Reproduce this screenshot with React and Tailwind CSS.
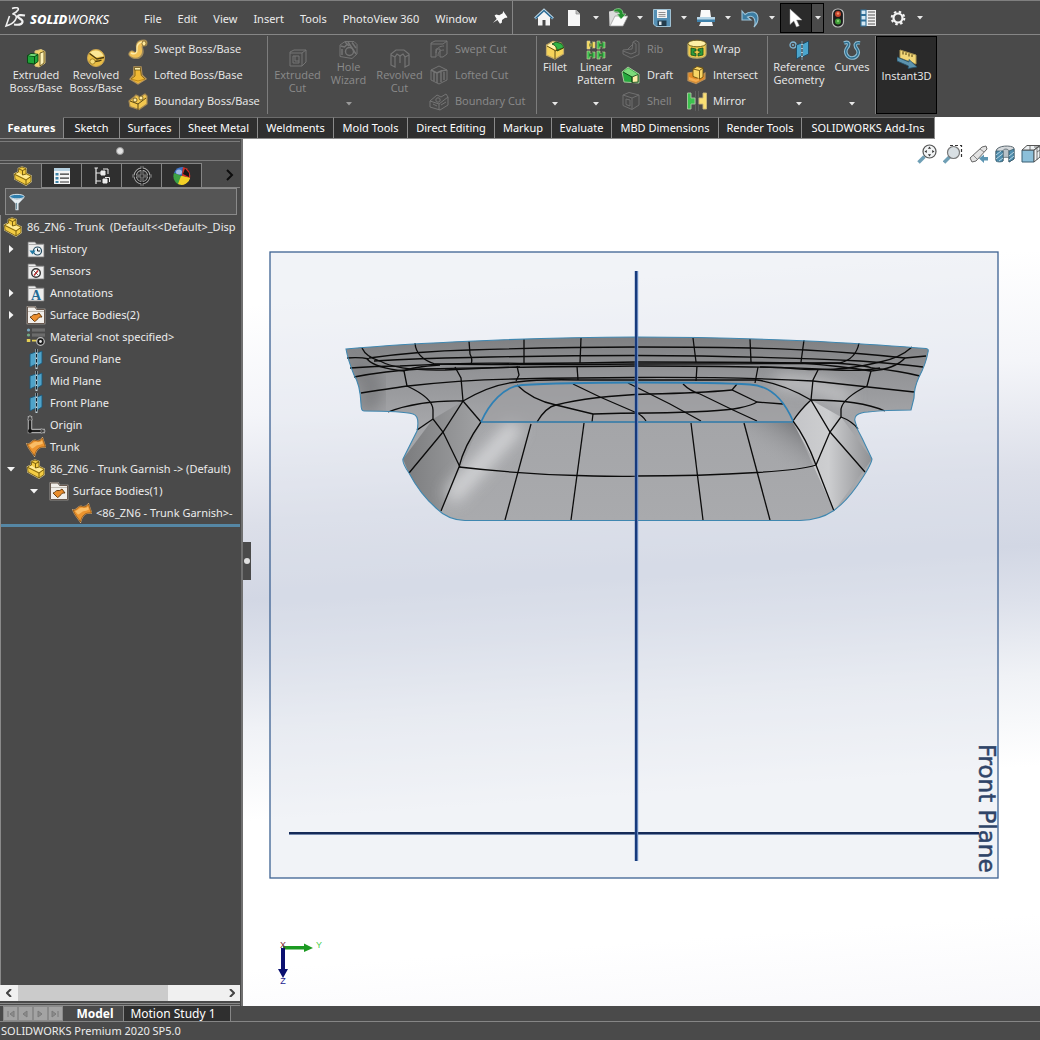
import { clsx } from 'clsx';

const menus = ['File', 'Edit', 'View', 'Insert', 'Tools', 'PhotoView 360', 'Window'];

const ribbonTabs = [
  { name: 'Features', width: 'w-[64px]' },
  { name: 'Sketch', width: 'w-[56px]' },
  { name: 'Surfaces', width: 'w-[60px]' },
  { name: 'Sheet Metal', width: 'w-[78px]' },
  { name: 'Weldments', width: 'w-[76px]' },
  { name: 'Mold Tools', width: 'w-[74px]' },
  { name: 'Direct Editing', width: 'w-[87px]' },
  { name: 'Markup', width: 'w-[57px]' },
  { name: 'Evaluate', width: 'w-[60px]' },
  { name: 'MBD Dimensions', width: 'w-[107px]' },
  { name: 'Render Tools', width: 'w-[83px]' },
  { name: 'SOLIDWORKS Add-Ins', width: 'w-[133px]' },
];

const tree = [
  { name: 'History', icon: 'history', arrow: 'closed' },
  { name: 'Sensors', icon: 'sensors' },
  { name: 'Annotations', icon: 'annotations', arrow: 'closed' },
  { name: 'Surface Bodies(2)', icon: 'bodies', arrow: 'closed' },
  { name: 'Material <not specified>', icon: 'material' },
  { name: 'Ground Plane', icon: 'plane' },
  { name: 'Mid Plane', icon: 'plane' },
  { name: 'Front Plane', icon: 'plane' },
  { name: 'Origin', icon: 'origin' },
  { name: 'Trunk', icon: 'surface' },
  { name: '86_ZN6 - Trunk Garnish -> (Default)', icon: 'part', arrow: 'open' },
  { name: 'Surface Bodies(1)', icon: 'bodies', arrow: 'open', depth: 1 },
  { name: '<86_ZN6 - Trunk Garnish>-', icon: 'surface', depth: 2 },
];

const depthPad = ['pl-1.5', 'pl-[29px]', 'pl-[52px]'];

const folder = (
  <>
    <path d="M2 3h7l1.500 2H18v13H2z" fill="#ececec" stroke="#777" strokeWidth="0.800" />
    <path d="M2.500 5.500h15" stroke="#9a9a9a" strokeWidth="0.800" />
  </>
);

const icons = {
  // features
  extrude: (
    <>
      <path d="M9 3l6-1.500 4 2V15l-6 4-4-1z" fill="#f2d36b" stroke="#d9c07a" />
      <path d="M14 5l4-1.500V15l-4 3z" fill="#fff3b8" stroke="#54430d" strokeWidth="0.800" />
      <path d="M1.500 7.500L5 5.500l7 .8v7.200l-3.500 2.500-7-1z" fill="#1fa53a" stroke="#0a4a14" />
      <path d="M1.500 7.500l7 1 3.500-2M8.500 8.500V16" fill="none" stroke="#0a4a14" />
      <path d="M2.300 7.400L5.200 6l5.800.6-2.700 1.300z" fill="#7fe07f" />
    </>
  ),
  revolve: (
    <>
      <circle cx="10" cy="10" r="8.500" fill="#e9bd45" stroke="#c9a452" />
      <path d="M4 4.500C8 1 15 2 17.500 8L9.500 9.500z" fill="#fbe796" />
      <path d="M3.500 5.500l7.500 5.500L18 9.500M4 14.500c5-2 8-.5 11.500-2.500" fill="none" stroke="#4a3a0c" strokeWidth="1.300" />
      <circle cx="6.500" cy="13.500" r="2.600" fill="#f7dd7a" stroke="#8a6a14" strokeWidth="0.700" />
    </>
  ),
  sweep: (
    <>
      <path d="M4 15c5 4 9 0 8-4S10 4 16 4" fill="none" stroke="#a08a5a" strokeWidth="7" strokeLinecap="round" />
      <path d="M4 15c5 3 8 0 7.500-4S10 4 16 4" fill="none" stroke="#f0c055" strokeWidth="5" strokeLinecap="round" />
      <path d="M3 14c4 2 6.500 0 6-4s1-6 5-7" fill="none" stroke="#fdeaa5" strokeWidth="1.400" />
      <ellipse cx="16" cy="4.500" rx="2" ry="2.600" fill="#ffe99b" stroke="#6d5726" strokeWidth="0.800" />
    </>
  ),
  loft: (
    <>
      <path d="M6 2h7l1 8 4 4-8 5-8-5 3.500-4z" fill="#f1b934" stroke="#b8955a" strokeWidth="1.300" />
      <path d="M6.500 2.500h6v2.500h-6z" fill="#fff0ad" stroke="#54430d" strokeWidth="0.700" />
      <path d="M7 5v6l-4 3M12.500 5l.8 5.500L17 14" fill="none" stroke="#5d450c" strokeWidth="0.700" />
      <path d="M3 14l7 2 7-2" fill="none" stroke="#b07a12" strokeWidth="0.800" />
    </>
  ),
  boundary: (
    <>
      <path d="M1 10l5-4 2-2 4 2 5-3 2 2v8l-8 5.500-9-3z" fill="#f2c74f" stroke="#a88a50" strokeWidth="1.200" />
      <path d="M2 10l8 3 8-6M10 13v6" fill="none" stroke="#4a3a0c" strokeWidth="0.900" />
      <circle cx="7" cy="9" r="2" fill="#ffeaa2" stroke="#4a3a0c" strokeWidth="0.700" />
      <circle cx="13" cy="7" r="2" fill="#ffeaa2" stroke="#4a3a0c" strokeWidth="0.700" />
    </>
  ),
  cutExtrude: (
    <g fill="none" stroke="#747474">
      <path d="M2 4l4-2h12v12l-4 4H2z" />
      <path d="M2 5h12v13M14 5l4-3" />
      <path d="M5 8h6v7H5zM7 8v5h4" />
    </g>
  ),
  holeWizard: (
    <g fill="none" stroke="#747474">
      <path d="M1 5l5-3.500h9l3 3V14l-5 4.500-12-2z" />
      <path d="M1.500 6l4 1 3-3M6 2l4 4M9 2l8 12M13 2.500L17 8M3 9v6" strokeWidth="1.500" />
      <circle cx="10.500" cy="11.500" r="4" strokeWidth="1.400" />
    </g>
  ),
  cutRevolve: (
    <g fill="none" stroke="#747474" strokeWidth="1.200">
      <path d="M1 6l5-4h8l5 4v11l-4 2V9l-2-3-3 2-3-2-2 3v10l-4-2z" />
      <path d="M5 9L1 7M15 9l4-2M10 8v7" />
    </g>
  ),
  cutSweep: (
    <g fill="none" stroke="#747474">
      <path d="M2 4l4-2h12v13l-4 3h-3V10H7v8H2z" />
      <path d="M2 5h12l4-3M7 14c0-5 4-7 8-7M9 17c0-4 2-6 6-6" />
    </g>
  ),
  cutLoft: (
    <g fill="none" stroke="#747474">
      <path d="M2 5l8-4 8 4v10l-8 4-8-4z" />
      <path d="M2 5l6 3v10M8 8l4-2v11M12 6l6-1M5 7v9M15 7v8" strokeWidth="1.400" />
    </g>
  ),
  cutBoundary: (
    <g fill="none" stroke="#747474">
      <path d="M1 10l7-6 4 2 5-3 2 3v8l-8 5-10-3z" />
      <path d="M1 10l9 3 9-7M10 13v6M4 13l4 2M12 14l5-3" />
      <circle cx="9" cy="9" r="2.200" />
    </g>
  ),
  fillet: (
    <>
      <path d="M1.500 5L8 1.500l8 1.500 2.500 4v7L10 19l-8.500-4z" fill="#f6d45a" stroke="#c2aa67" strokeWidth="1.200" />
      <path d="M2 5.500l6-3.500 8 1.500-4 2.500c-1.500 1-2 2-2 3.500z" fill="#fff2b0" />
      <path d="M7 4l4-2 5 1.500c1.500 1 2.500 2.500 2.500 4.500L12 11c0-4-2-6-5-7z" fill="#2fb344" stroke="#0f4d1a" strokeWidth="0.900" />
      <path d="M2 6l8 4.500V19M10 11l8-3" fill="none" stroke="#54430d" strokeWidth="0.900" />
    </>
  ),
  pattern: (
    <>
      {[[1, 1, '#f7db5e'], [11, 1, '#3cc04f'], [1, 11, '#3cc04f'], [11, 11, '#3cc04f']].map(([x, y, fill]) => (
        <g key={`${x}-${y}`} transform={`translate(${x} ${y})`}>
          <path d="M0 0h3v2.500h2V1h3v6H5V5.500H3V8H0z" fill={fill} stroke="#d3ccA0" strokeWidth="0.600" />
          <path d="M3 2.500v3M5 1v6" stroke="#1c3a1c" strokeWidth="0.900" />
        </g>
      ))}
    </>
  ),
  rib: (
    <g fill="none" stroke="#6f6f6f">
      <path d="M2 11l9-1 1-7 3-1.500 3 2v12l-8 3.500-8-4z" />
      <path d="M12 3l3 2v8l-5 2-8-3M6 11l6-6" />
    </g>
  ),
  draft: (
    <>
      <path d="M1 7l6-5 11 7v9L3 17z" fill="#25a83d" stroke="#a9c79c" />
      <path d="M2 7l5-4 10 6.500-6 2.500z" fill="#7ddb7b" />
      <path d="M11 12l6-2.500V17l-6 .500z" fill="#fff0a8" stroke="#234d22" strokeWidth="0.900" />
      <path d="M2 7l9 5v5.500" fill="none" stroke="#0c4a15" />
    </>
  ),
  shell: (
    <g fill="none" stroke="#6f6f6f">
      <path d="M2 4l6-2.500L18 4v10l-7 4.500-9-4z" />
      <path d="M2 4l9 3v11M11 7l7-3M5 8l4 1v6l-4-1.500z" />
    </g>
  ),
  wrap: (
    <>
      <path d="M1 5v10c0 5.500 18 5.500 18 0V5z" fill="#efc948" stroke="#b7aa6a" strokeWidth="1.200" />
      <ellipse cx="10" cy="4.500" rx="9" ry="3.300" fill="#fff0a6" stroke="#6b5815" strokeWidth="0.900" />
      <path d="M4 9l5 1v2H7v2l2 .5V17l-5-1zM11 10l5-1v7l-5 1v-2.500l2-.500v-2h-2z" fill="#2c9a3c" stroke="#174d1d" strokeWidth="0.800" />
    </>
  ),
  intersect: (
    <>
      <path d="M1 8l5-1 9 3 3-2v6l-9 4.500-8-3z" fill="#e48b27" stroke="#bb9157" strokeWidth="1.200" />
      <path d="M6 4l4-2.500 6 1.500v9l-3 2-7-2.500z" fill="#f8d565" stroke="#6b5010" strokeWidth="0.900" />
      <path d="M6 4l6.500 1.500L16 3M12.500 5.500V14" fill="none" stroke="#6b5010" strokeWidth="0.900" />
      <path d="M2 12l7 2.500 3-1.500v2.500l-3 1.500-7-2z" fill="#f4ad4f" />
    </>
  ),
  mirror: (
    <>
      <path d="M0.500 2H4v5h4v6H4v5H.5z" fill="#3cc24e" stroke="#a9c7a0" strokeWidth="0.900" />
      <path d="M19.500 2H16v5h-4v6h4v5h3.500z" fill="#f9df73" stroke="#c9b77a" strokeWidth="0.900" />
      <path d="M10 0v20" stroke="#b5b5b5" strokeWidth="2.400" />
      <path d="M10 0v20" stroke="#0d0d0d" strokeWidth="1.300" />
    </>
  ),
  refGeometry: (
    <>
      <circle cx="4" cy="5" r="3" fill="none" stroke="#7fb4d2" strokeWidth="1.300" />
      <circle cx="4" cy="5" r="1" fill="#7fb4d2" />
      <path d="M7.500 5l5-2v13l-5 3zM13.500 4l6-3v13l-6 3z" fill="#4ba5cc" stroke="#1d4a63" strokeWidth="0.900" />
      <path d="M13 1v19" stroke="#b8d3df" strokeWidth="1.800" />
      <path d="M13 1v19" stroke="#0f1c26" strokeDasharray="3 1" />
    </>
  ),
  curves: (
    <>
      <path d="M2 3c5-2 6 1 3 5s0 10 5 10 8-5 5-9-2-7 3-6" fill="none" stroke="#8fbbd0" strokeWidth="3.600" />
      <path d="M2 3c5-2 6 1 3 5s0 10 5 10 8-5 5-9-2-7 3-6" fill="none" stroke="#2b6d8e" strokeWidth="1.400" />
    </>
  ),
  instant3d: (
    <>
      <path d="M3 1l16 5v9L3 9z" fill="#f2d778" stroke="#ac9752" />
      <path d="M6 2.500v3M9 3.500v2.500M12 4.500v3M15 5.500v2.500" stroke="#4a3b0b" />
      <path d="M0 8l12 5v-2.500l8 7.500-9 1.500.500-2.500L0 12z" fill="#5d93ad" stroke="#24516a" strokeWidth="0.800" />
    </>
  ),
  // quick access toolbar
  home: (
    <>
      <path d="M4 9v8.500h4.500v-5.500h3v5.500H16V9l-6-5.500z" fill="#f4f4f4" />
      <path d="M1 10.500L10 2l9 8.500" fill="none" stroke="#b9d6e8" strokeWidth="2.600" />
      <path d="M1.500 10.500L10 2.500l8.500 8" fill="none" stroke="#20618b" strokeWidth="1.200" />
    </>
  ),
  newDoc: (
    <>
      <path d="M4 2h8l4 4v12H4z" fill="#f7f7f7" />
      <path d="M12 2v4h4" fill="#c4c4c4" stroke="#848484" strokeWidth="0.700" />
    </>
  ),
  open: (
    <>
      <path d="M1 3.500l5-1 1.500 2H12v13.500H1.500z" fill="#dcdcdc" />
      <path d="M2 18L7 8h13l-5 10z" fill="#fafafa" stroke="#999" strokeWidth="0.700" />
      <path d="M6 2c5-3 9-1 9 4h3l-5 5-4-5h2.500C11.500 4 9 3 6 4z" fill="#23912f" stroke="#a6d7a6" strokeWidth="0.700" />
    </>
  ),
  save: (
    <>
      <path d="M1.500 1.500h17v17H4l-2.500-2.500z" fill="#5590b5" stroke="#a9cbdd" strokeWidth="0.900" />
      <path d="M5 2h10v8H5z" fill="#f4f4f4" />
      <path d="M6.500 4.500h7M6.500 6.500h7M6.500 8.300h7" stroke="#777" strokeWidth="0.800" />
      <path d="M5.500 12.500h9V18h-9z" fill="#243c4c" />
      <path d="M7 13.500h2.500V17H7z" fill="#dfe9ef" />
    </>
  ),
  print: (
    <>
      <path d="M5 2h9l1 7H4z" fill="#fafafa" />
      <path d="M1 9h18v5H1z" fill="#b7d5e6" />
      <path d="M1 11.500h18V14H1z" fill="#3e81ab" />
      <path d="M5 14h11l1 4H3z" fill="#f4f4f4" />
    </>
  ),
  undo: <path d="M2 3v9h9L7.500 9c4-2 8 0 7.500 7 0 1-.5 2-1 3 6-6 5-15-2-15-3 0-5 .5-7 2.500z" fill="#3c7da3" stroke="#9cc4da" strokeWidth="1.100" />,
  cursor: <path d="M4 1v15.500l3.800-3.500 2.700 6 2.800-1.200-2.700-5.800h5.400z" fill="#fff" stroke="#999" strokeWidth="0.500" />,
  traffic: (
    <>
      <rect x="4.500" y="1" width="11" height="18" rx="5" fill="#1c1c1c" stroke="#bdbdbd" strokeWidth="1.200" />
      <circle cx="10" cy="6" r="3" fill="#c6452c" />
      <circle cx="10" cy="13.500" r="3" fill="#3f9b37" />
      <circle cx="10" cy="5.500" r="1.200" fill="#f0936e" />
      <circle cx="10" cy="13" r="1.200" fill="#7fcf6c" />
    </>
  ),
  options: (
    <>
      <path d="M3 2h15v16H3z" fill="#f1f1f1" />
      <path d="M3 2h5v4.500H3zM3 7.500h5V12H3zM3 13h5v5H3z" fill="#d5e8f3" stroke="#2f6f98" strokeWidth="1.100" />
      <path d="M10 4h7M10 7h7M10 10h7M10 13h7M10 16h7" stroke="#555" />
    </>
  ),
  gear: (
    <g fill="none" stroke="#f4f4f4">
      <circle cx="10" cy="10" r="4.500" strokeWidth="2.200" />
      <circle cx="10" cy="10" r="6.300" strokeWidth="2" strokeDasharray="2.474 2.474" />
    </g>
  ),
  pin: (
    <path d="M11 2l6 6-1.500 1-1-.200-3 3.200.300 3-1.800 1.500-3.500-3.500L2 17l3.500-5L2.500 8.500 4 7l3.500.3L11 4.500z" fill="#fafafa" transform="rotate(10 10 10)" />
  ),
  // manager tabs and tree
  part: (
    <>
      <path d="M1.500 8l4-2V2.500L9 1l4 1.500v5L18 10v5.500l-5 3.500L2 13z" fill="#f3cc43" stroke="#e7d9a0" strokeWidth="1.600" />
      <path d="M1.500 8l4-2V2.500L9 1l4 1.500v5L18 10v5.500l-5 3.500L2 13z" fill="#f3cc43" stroke="#6b5208" strokeWidth="0.800" />
      <path d="M2.500 8l3.500-1.500 3 2.500 3.500-.500 4.500 2-4 2.500z" fill="#ffeb95" />
      <path d="M6 3l3.500 1.500L13 3M9.500 4.500V9L13 8M2 8.500l11 5.500 5-3.500M13 14v5" fill="none" stroke="#6b5208" strokeWidth="0.900" />
    </>
  ),
  property: (
    <>
      <path d="M2 2h16v16H2z" fill="#f4f4f4" />
      <path d="M2 2h16v3H2z" fill="#b4cfdf" />
      <path d="M3.500 7h3v2.500h-3zM3.500 11h3v2.500h-3zM3.500 15h3v2h-3z" fill="#3e83a8" />
      <path d="M8 8.200h9M8 12.200h9M8 16h9" stroke="#333" strokeWidth="1.200" />
    </>
  ),
  config: (
    <g fill="none" stroke="#ececec">
      <path d="M4 2v16M2.500 2H6M4 7h5M4 15h5" strokeWidth="1.200" />
      <path d="M9 5h4v4H9zM11 13h4v4h-4z" fill="#ececec" />
      <path d="M11 3h5v5M13 11.500h4.500V16" />
    </g>
  ),
  dimxpert: (
    <g fill="none">
      <circle cx="10" cy="10" r="6.800" stroke="#a9a9a9" strokeWidth="3.200" />
      <path d="M10 0v20M0 10h20" stroke="#b3b3b3" strokeWidth="2.600" />
      <circle cx="10" cy="10" r="6.800" stroke="#1d1d1d" strokeWidth="1.300" />
      <path d="M10 0v20M0 10h20" stroke="#161616" strokeWidth="1.200" />
    </g>
  ),
  display: (
    <>
      <path d="M10 10L2 7a9 9 0 0 1 9-6z" fill="#3e72c4" />
      <path d="M10 10l1-9a9 9 0 0 1 7 11z" fill="#d3302b" />
      <path d="M10 10l8 2a9 9 0 0 1-9 7z" fill="#f2cf27" />
      <path d="M10 10l-1 9A9 9 0 0 1 2 7z" fill="#3da243" />
      <path d="M9 10l9 2a9 9 0 0 1-12 6z" fill="#f2cf27" />
      <path d="M11 8l2-5.500 4 4.500 0 4z" fill="#161616" />
      <ellipse cx="7" cy="6" rx="3" ry="2.500" fill="#fff" opacity="0.500" />
    </>
  ),
  filter: (
    <>
      <ellipse cx="10" cy="4" rx="8" ry="2.500" fill="#2f7fae" stroke="#e5f1f7" />
      <path d="M2 5l6.500 7v7h3v-7L18 5c-4 2.500-12 2.500-16 0z" fill="#e6eef2" stroke="#b4c4cc" strokeWidth="0.600" />
      <path d="M9.500 11v7" stroke="#57808f" />
    </>
  ),
  history: (
    <>
      {folder}
      <circle cx="11.500" cy="12" r="4" fill="#eaf4f8" stroke="#22495e" strokeWidth="1.200" />
      <path d="M11.500 9.500V12h2.500" fill="none" stroke="#1a1a1a" />
      <path d="M3.500 11.500l3 4 3-4z" fill="#1f7aa5" />
    </>
  ),
  sensors: (
    <>
      {folder}
      <circle cx="10" cy="12" r="4.300" fill="#fff" stroke="#333" strokeWidth="1.400" />
      <path d="M8 14.500l4-5" stroke="#c03030" strokeWidth="1.500" />
      <path d="M7.500 9.500l5 5" stroke="#333" strokeWidth="0.700" />
    </>
  ),
  annotations: (
    <>
      {folder}
      <text x="10" y="17" textAnchor="middle" fontFamily="Liberation Serif, serif" fontWeight="700" fontSize="14" fill="#226a95">A</text>
    </>
  ),
  bodies: (
    <>
      <path d="M1.500 2h7.500l1.500 2.500h8V18.500h-17z" fill="#f1eeea" stroke="#cfc9c2" strokeWidth="1.600" />
      <path d="M1.500 2h7.500l1.500 2.500h8V18.500h-17z" fill="#f1eeea" stroke="#5a4a40" strokeWidth="0.900" />
      <path d="M2 6.500h16" stroke="#b5aea6" strokeWidth="0.800" />
      <path d="M4 12c2 0 2.500-3 5-2.500 2 .4 2.500-.5 4-1.500l3 4c-2 0-3 0-4 1.500-.6 1-1.500 2-3.500 3z" fill="#ea8d2c" stroke="#5c3206" strokeWidth="0.900" />
    </>
  ),
  material: (
    <>
      <path d="M6 3h13M6 8h13" stroke="#9a9a9a" strokeWidth="2.400" />
      <path d="M6 3h13M6 8h13" stroke="#333" strokeWidth="0.900" />
      <circle cx="2.500" cy="3" r="1.600" fill="#7aa9c1" />
      <circle cx="2.500" cy="8" r="1.600" fill="#73a985" />
      <path d="M.8 12h3.500v3H.8zM6 12.800h6v1.700H6z" fill="#e4cf54" />
      <circle cx="14.500" cy="14.500" r="3.800" fill="#1a1a1a" stroke="#c0c0c0" strokeWidth="1.200" />
      <circle cx="14.500" cy="14.500" r="1.400" fill="#e4e4e4" />
    </>
  ),
  plane: (
    <>
      <path d="M4 5l6-2v12l-6 3zM11 4l5-2v12l-5 3z" fill="#4fa3c9" stroke="#1c5878" strokeWidth="0.900" />
      <path d="M10.500 0v20" stroke="#c3d5dd" strokeWidth="2" />
      <path d="M10.500 0v20" stroke="#10222d" strokeDasharray="3.500 1.500" />
    </>
  ),
  origin: (
    <>
      <path d="M4 1v15h15" fill="none" stroke="#a9a9a9" strokeWidth="4.500" />
      <path d="M4 2v14h14" fill="none" stroke="#222" strokeWidth="2.200" />
      <path d="M1.500 5L4 0l2.500 5zM15 13.500l4.500 2.500-4.500 2.500z" fill="#3c3c3c" stroke="#a9a9a9" strokeWidth="0.600" />
      <circle cx="4" cy="16" r="2" fill="#111" />
    </>
  ),
  surface: (
    <>
      <path d="M1 7C5 8 6 2 10 3.500c3 1 5-.5 6.500-2.500L19.500 10c-4 0-6 0-8.500 3-1.500 2-2 4-2.500 6C7 16 2.500 12 1 7z" fill="#ec942f" stroke="#d8b07a" strokeWidth="1.400" />
      <path d="M1 7C5 8 6 2 10 3.500c3 1 5-.5 6.500-2.500L19.500 10c-4 0-6 0-8.500 3-1.500 2-2 4-2.500 6C7 16 2.500 12 1 7z" fill="#ec942f" stroke="#6b3a07" strokeWidth="0.600" />
      <path d="M3 8c3-.5 4.500-4 7.500-3.200 2 .5 4 .2 5.500-1.300l1 3c-3 2-5 1-7 2.500-2 1.400-3 2.500-4 2.500z" fill="#f9bd66" />
    </>
  ),
  // view toolbar
  zoomFit: (
    <>
      <path d="M1.500 18.500l6-6" stroke="#6f9fb5" strokeWidth="3.500" />
      <circle cx="12.500" cy="7.500" r="6.500" fill="#f1f3f4" stroke="#555" strokeWidth="1.200" />
      <path d="M12.500 2.500l1.600 2.300h-3.200zM12.500 12.500l1.600-2.300h-3.200zM7.500 7.500l2.300-1.600v3.200zM17.500 7.500l-2.300-1.600v3.200z" fill="#333" />
    </>
  ),
  zoomArea: (
    <>
      <path d="M7 1.500h11.500V14" fill="none" stroke="#333" strokeWidth="1.200" strokeDasharray="3 2" />
      <path d="M1 18.500l6-6" stroke="#6f9fb5" strokeWidth="3.500" />
      <circle cx="10.500" cy="8.500" r="6" fill="#d8dfe3" stroke="#777" strokeWidth="1.200" />
    </>
  ),
  prevView: (
    <>
      <path d="M1 14L13 3l4-1 1 3L7 17l-4 1z" fill="#e3e3e3" stroke="#666" />
      <path d="M4 11l4 4M11 5l4 3" stroke="#888" />
      <path d="M10 14.500l5-4v2.500h4v3.500h-4V19z" fill="#5c95b2" />
    </>
  ),
  section: (
    <>
      <path d="M1 7C2 1 17 1 19 4v11l-5 3V7H8v10l-7-1z" fill="#d5d9dc" stroke="#5b6870" />
      <path d="M8 6.500c1-2 5-2 6 .5v7c-2-1-4-1-6 0z" fill="#b9c2c8" stroke="#5b6870" strokeWidth="0.800" />
      <path d="M1 7h7v10c-2 1.500-6 1-7 0zM14 7l5-2v10l-5 3z" fill="#4f8eae" stroke="#365a6c" strokeWidth="0.800" />
      <path d="M1 11l5-4M1 15l7-5.500M4 17l4-3M14 12l5-4M14 16l5-4" stroke="#d6e8f1" strokeWidth="0.800" />
    </>
  ),
  orient: (
    <>
      <path d="M1 6h12v12H1z" fill="#8cc0da" stroke="#3b5f72" />
      <path d="M1 6l5-4.500h13L13 6zM13 6l6-4.500V13l-6 5z" fill="#eef2f4" stroke="#555" />
      <path d="M9 1v5M13 3h6M16 8l3-2M16 4v12" stroke="#555" strokeWidth="0.800" />
    </>
  ),
};

const Icon = ({ name, size = 20 }) => (
  <svg viewBox="0 0 20 20" width={size} height={size} className="shrink-0" aria-hidden="true">
    {icons[name]}
  </svg>
);

const Caret = ({ className = 'text-[#e8e8e8]' }) => (
  <svg viewBox="0 0 6 4" width="6" height="4" className={className} aria-hidden="true">
    <path d="M0 0h6L3 3.500z" fill="currentColor" />
  </svg>
);

const DropButton = ({ label }) => (
  <button type="button" aria-label={label} className="flex h-7 w-4 items-center justify-center">
    <Caret />
  </button>
);

const ToolButton = ({ icon, label, drop }) => (
  <div className="flex">
    <button type="button" aria-label={label} className="flex h-7 w-7 items-center justify-center">
      <Icon name={icon} />
    </button>
    {drop && <DropButton label={`${label} options`} />}
  </div>
);

function TitleBar() {
  return (
    <header className="flex h-[35px] shrink-0 items-center border-y border-t-[#7f7f7f] border-b-[#868686]">
      <div className="flex h-full w-[513px] shrink-0 items-center border-r border-[#868686]">
        <div className="flex w-[136px] items-center gap-1 pl-1">
          <svg viewBox="0 0 22 22" width="22" height="22" fill="none" stroke="#f0f0f0" strokeWidth="1.600" aria-label="DS">
            <path d="M8 1.500C12 0 15.500.5 14 3c-1 1.700-3 3-5.500 4 4 .5 5 3 2.500 6.500-2 2.700-5 4.500-9 5.500L5.500 9" />
            <path d="M21 8.500c-3-.6-7.500-.8-7.300 1.200C13.900 11.500 19 12 18.500 15c-.4 2.500-4.500 3-8.500 2.500" strokeWidth="2.200" />
          </svg>
          <span className="pt-1 text-[13px] text-white italic">
            <b className="font-extrabold">SOLID</b>WORKS
          </span>
        </div>
        <nav className="flex">
          {menus.map((menu) => (
            <button key={menu} type="button" className="px-2 pt-1">{menu}</button>
          ))}
        </nav>
        <button type="button" aria-label="Pin menu" className="mr-0.5 ml-auto">
          <Icon name="pin" size={18} />
        </button>
      </div>

      <div className="flex items-center gap-0.5 pl-[17px]">
        <ToolButton icon="home" label="Home" />
        <div className="flex items-center">
          <ToolButton icon="newDoc" label="New" drop />
          <ToolButton icon="open" label="Open" drop />
          <ToolButton icon="save" label="Save" drop />
          <ToolButton icon="print" label="Print" drop />
          <ToolButton icon="undo" label="Undo" drop />
          <button type="button" aria-label="Select" className="flex h-[30px] w-8 items-center justify-center border border-black bg-[#2a2a2a]">
            <Icon name="cursor" />
          </button>
          <button type="button" aria-label="Select options" className="flex h-[30px] w-3 items-center justify-center border border-l-0 border-black">
            <Caret />
          </button>
          <ToolButton icon="traffic" label="Rebuild" />
        </div>
        <ToolButton icon="options" label="File properties" />
        <ToolButton icon="gear" label="Options" drop />
      </div>
    </header>
  );
}

const BigButton = ({ icon, lines, width, drop, disabled, active }) => (
  <button
    type="button"
    disabled={disabled}
    className={clsx(
      'relative flex h-[78px] shrink-0 flex-col items-center leading-[13px]',
      width,
      drop ? 'pt-1' : 'pt-3',
      disabled && 'text-[#8b8b8b]',
      active && 'border border-black bg-[#2a2a2a]',
    )}
  >
    <Icon name={icon} />
    <span className="flex flex-col">
      {lines.map((line) => (
        <span key={line}>{line}</span>
      ))}
    </span>
    {drop && (
      <span className="absolute bottom-2">
        <Caret className={disabled ? 'text-[#9a9a9a]' : 'text-[#e8e8e8]'} />
      </span>
    )}
  </button>
);

const SmallButton = ({ icon, label, disabled }) => (
  <button type="button" disabled={disabled} className={clsx('flex h-[26px] items-center gap-1.5 px-0.5 whitespace-nowrap', disabled && 'text-[#8b8b8b]')}>
    <Icon name={icon} />
    {label}
  </button>
);

const Group = ({ width, children }) => (
  <div className={clsx('flex h-[78px] shrink-0 border-r border-[#7d7d7d]', width)}>{children}</div>
);

function Ribbon() {
  return (
    <div className="flex h-[82px] shrink-0 items-start pt-px font-['Open_Sans','Noto_Sans',sans-serif]">
      <Group width="w-[268px] pl-1.5">
        <BigButton icon="extrude" lines={['Extruded', 'Boss/Base']} width="w-[60px]" />
        <BigButton icon="revolve" lines={['Revolved', 'Boss/Base']} width="w-[60px]" />
        <div>
          <SmallButton icon="sweep" label="Swept Boss/Base" />
          <SmallButton icon="loft" label="Lofted Boss/Base" />
          <SmallButton icon="boundary" label="Boundary Boss/Base" />
        </div>
      </Group>
      <Group width="w-[269px] pl-1">
        <BigButton icon="cutExtrude" lines={['Extruded', 'Cut']} width="w-[51px]" disabled />
        <BigButton icon="holeWizard" lines={['Hole', 'Wizard']} width="w-[51px]" drop disabled />
        <BigButton icon="cutRevolve" lines={['Revolved', 'Cut']} width="w-[51px]" disabled />
        <div className="pl-0.5">
          <SmallButton icon="cutSweep" label="Swept Cut" disabled />
          <SmallButton icon="cutLoft" label="Lofted Cut" disabled />
          <SmallButton icon="cutBoundary" label="Boundary Cut" disabled />
        </div>
      </Group>
      <Group width="w-[231px]">
        <BigButton icon="fillet" lines={['Fillet']} width="w-[36px]" drop />
        <BigButton icon="pattern" lines={['Linear', 'Pattern']} width="w-[46px]" drop />
        <div className="w-[66px]">
          <SmallButton icon="rib" label="Rib" disabled />
          <SmallButton icon="draft" label="Draft" />
          <SmallButton icon="shell" label="Shell" disabled />
        </div>
        <div>
          <SmallButton icon="wrap" label="Wrap" />
          <SmallButton icon="intersect" label="Intersect" />
          <SmallButton icon="mirror" label="Mirror" />
        </div>
      </Group>
      <Group width="w-[108px]">
        <BigButton icon="refGeometry" lines={['Reference', 'Geometry']} width="w-[62px]" drop />
        <BigButton icon="curves" lines={['Curves']} width="w-[44px]" drop />
      </Group>
      <BigButton icon="instant3d" lines={['Instant3D']} width="w-[61px]" active />
    </div>
  );
}

function RibbonTabs() {
  return (
    <div role="tablist" className="flex h-[22px] shrink-0 bg-white">
      {ribbonTabs.map((tab, i) => (
        <button
          key={tab.name}
          type="button"
          role="tab"
          aria-selected={i === 0}
          className={clsx(
            'shrink-0 border-t border-r border-b border-r-[#8a8a8a] border-b-[#8a8a8a] whitespace-nowrap text-white',
            tab.width,
            i === 0 ? 'border-t-[#4a4a4a] bg-[#4a4a4a] font-bold' : 'border-t-[#6c6c6c] bg-[#2f2f2f]',
          )}
        >
          {tab.name}
        </button>
      ))}
    </div>
  );
}

const TreeArrow = ({ state }) => (
  <svg viewBox="0 0 8 8" width="8" height="8" className="shrink-0" aria-hidden="true">
    {state === 'closed' && <path d="M2 0l4.500 4L2 8z" fill="#f4f4f4" />}
    {state === 'open' && <path d="M0 2h8L4 6.500z" fill="#f4f4f4" />}
  </svg>
);

function FeatureTree() {
  const tabs = ['part', 'property', 'config', 'dimxpert', 'display'];

  return (
    <aside className="flex w-[243px] shrink-0 flex-col border-r-2 border-[#707070] pr-px">
      <div className="mt-0.5 flex h-5 shrink-0 items-center justify-center border-y border-[#7b7b7b]">
        <span className="h-2 w-2 rounded-full border border-[#9a9a9a] bg-[#e4e4e4]" />
      </div>
      <div className="mt-0.5 flex h-[25px] shrink-0" role="tablist">
        {tabs.map((tab, i) => (
          <button
            key={tab}
            type="button"
            role="tab"
            aria-label={tab}
            aria-selected={i === 0}
            className={clsx('flex items-center justify-center border-t border-r border-[#858585]', i === 0 ? 'w-[42px] pl-1' : 'w-10 border-b bg-[#2f2f2f]')}
          >
            <Icon name={tab} />
          </button>
        ))}
        <button type="button" aria-label="More tabs" className="flex flex-1 items-center justify-end border-b border-[#858585] pr-1.5">
          <svg viewBox="0 0 8 12" width="8" height="12" fill="none" stroke="#0d0d0d" strokeWidth="2" aria-hidden="true">
            <path d="M1 1l5 5-5 5" />
          </svg>
        </button>
      </div>
      <label className="mr-[3px] ml-[5px] flex h-[27px] shrink-0 items-center border border-[#8a8a8a] bg-[#555] pl-0.5">
        <Icon name="filter" size={18} />
        <input type="text" aria-label="Filter tree" className="min-w-0 flex-1 bg-transparent px-1 text-white outline-none" />
      </label>

      <div className="flex min-h-0 flex-1 flex-col overflow-hidden border-l border-[#8a8a8a] pt-px">
        <button type="button" className="flex h-[22px] shrink-0 items-center gap-1 pl-0.5 whitespace-pre">
          <Icon name="part" />
          {'86_ZN6 - Trunk  (Default<<Default>_Disp'}
        </button>
        <ul className="border-b-[3px] border-[#5587a5]">
          {tree.map((node, i) => (
            <li key={i}>
              <button type="button" className={clsx('flex h-[22px] items-center whitespace-nowrap', depthPad[node.depth ?? 0])}>
                <TreeArrow state={node.arrow} />
                <span className="ml-[11px] flex items-center gap-1">
                  <Icon name={node.icon} />
                  {node.name}
                </span>
              </button>
            </li>
          ))}
        </ul>
      </div>

      <div className="flex h-4 shrink-0 items-center bg-[#f0f0f0] text-[#444]">
        <button type="button" aria-label="Scroll left" className="flex w-[18px] justify-center">
          <svg viewBox="0 0 6 8" width="6" height="8" fill="none" stroke="currentColor" strokeWidth="2"><path d="M5 0L1 4l4 4" /></svg>
        </button>
        <div className="flex-1 self-stretch">
          <div className="h-full w-[73%] bg-[#cbcbcb]" />
        </div>
        <button type="button" aria-label="Scroll right" className="flex w-4 justify-center">
          <svg viewBox="0 0 6 8" width="6" height="8" fill="none" stroke="currentColor" strokeWidth="2"><path d="M1 0l4 4-4 4" /></svg>
        </button>
      </div>
      <div className="mt-0.5 h-[3px] shrink-0 border-y border-[#8a8a8a]" />
    </aside>
  );
}

const OUTLINE =
  'M346 349Q400 344 475 341Q560 337 636 337Q720 337 820 341.500Q885 345 926 348.500Q929 349 928 352Q926 364 919 377Q914 388 914 398L911 410Q885 410 868 412Q853 413 855 421Q857 430 862 438L872 459Q871 466 857 486Q845 503 833 511Q820 520 800 520.500H465Q448 520 436 508Q420 494 409 473Q402 463 403 459L417 431Q420 416 413 414Q403 411 364 411Q361 411 361 404Q360 384 354 375Q348 360 346 349Z';

const MESH = [
  // long bands across the top lip
  'M347 358Q360 357 369 359',
  'M369 358Q420 351 469 350Q560 347 636 347Q750 347 806 350Q860 353 905 358L926 356',
  'M374 361Q420 358 470 357.500Q560 355.500 636 355.500Q760 356 860 361Q900 364 923 367',
  'M350 368Q375 366 400 366Q470 362 520 363.500Q580 363 636 362Q760 362 830 363Q860 364 872 368Q900 371 920 376',
  'M435 364Q520 365 636 364Q760 364 840 363',
  'M354 377Q385 371 420 369Q500 367 636 366Q760 366 818 369Q860 372 880 368',
  'M361 393Q400 387 408 386Q460 380 515 379Q580 377.500 636 377.500Q740 377 813 381Q860 386 914 392',
  'M517 382Q540 379 580 380H700Q745 380 757 380',
  'M362 348Q366 357 380 361Q398 371 445 370Q480 368 520 367',
  'M367 359Q375 368 404 371Q412 367 440 365',
  'M912 347Q900 358 880 362Q840 372 800 369Q780 367 760 367',
  'M905 358Q895 369 871 371Q840 366 801 363',
  // verticals of the lip
  'M415 343Q416 358 435 364',
  'M469 341L470 354Q473 360 471 364',
  'M524 339V363',
  'M581 338L580 363',
  'M693 338L696 362',
  'M750 339L751 362',
  'M804 340L801 362',
  'M859 343Q856 359 840 363',
  'M517 366L519 375L516 381',
  'M577 366L578 380',
  'M697 366L696 381',
  'M758 367L755 383',
  // side panels
  'M404 371L407 386Q433 398 433 410V419L443 432L460 467',
  'M388 412Q420 400 463 401',
  'M455 367L461 378L463 401L443 432L409 473',
  'M463 401Q492 384 517 382',
  'M463 401L481 422',
  'M417 430L433 419',
  'M481 422Q464 446 459 467L441 511',
  'M871 371L867 386Q843 398 841 409V417L830 432L816 465',
  'M885 411Q860 400 811 400',
  'M818 370L813 380L811 400L830 432L865 472',
  'M811 400Q784 384 757 380',
  'M811 400Q800 410 793 421',
  'M841 417Q852 421 858 429',
  'M793 421Q806 438 816 465L834 511',
  // lower face
  'M459 467Q520 474 577 475.500T636 476Q700 476 757 472.500Q800 470 816 465',
  'M531 424L505 520',
  'M584 423L571 520',
  'M691 423L703 520',
  'M744 423L770 520',
  // garnish recess
  'M517 385Q532 400 556 405L593 414Q620 413 650 413Q720 412 739 408Q753 405 757 402L783 404',
  'M537 422Q546 407 556 405Q590 396 650 394Q700 393 732 390L757 402',
  'M732 390L737 384',
  'M573 384L600 397L637 413Q643 416 646 421',
  'M628 383L670 404L701 421',
  'M683 384Q690 391 700 394L733 410L757 421',
  'M593 414L592 422',
];

const GARNISH = 'M481 422C489 404 504 386 522 385Q560 382.500 636 382.500Q720 382.500 750 384.500Q778 386 793 421';

function ModelView() {
  return (
    <svg viewBox="243 139 797 867" className="h-full w-full" role="img" aria-label="Trunk model">
      <defs>
        <linearGradient id="metal" x1="0" x2="0" y1="0" y2="1">
          <stop offset="0" stopColor="#7e7f81" />
          <stop offset="0.200" stopColor="#939497" />
          <stop offset="0.450" stopColor="#a4a5a8" />
          <stop offset="1" stopColor="#a9aaad" />
        </linearGradient>
        <linearGradient id="side" x1="0" x2="1" y1="0" y2="0">
          <stop offset="0" stopColor="#7b7c7e" />
          <stop offset="1" stopColor="#a1a2a4" />
        </linearGradient>
        <linearGradient id="sideRight" x1="0" x2="1" y1="0" y2="0">
          <stop offset="0" stopColor="#c4c5c8" />
          <stop offset="0.450" stopColor="#cdced0" />
          <stop offset="1" stopColor="#8f9093" />
        </linearGradient>
        <linearGradient id="shade" x1="1" x2="0" y1="0" y2="1">
          <stop offset="0" stopColor="#5f6063" />
          <stop offset="0.700" stopColor="#a7a8ab" stopOpacity="0" />
        </linearGradient>
        <filter id="soft" x="-60%" y="-100%" width="220%" height="300%">
          <feGaussianBlur stdDeviation="8" />
        </filter>
        <clipPath id="body">
          <path d={OUTLINE} />
        </clipPath>
      </defs>

      <rect x="270" y="252" width="728" height="626" fill="#dbe1eb" fillOpacity="0.400" stroke="#3d6292" strokeWidth="1.300" />

      <path d={OUTLINE} fill="url(#metal)" />
      <g clipPath="url(#body)">
        <path d="M403 459L433 419L463 401L481 422L441 511L420 500Z" fill="url(#side)" />
        <path d="M811 400L841 417L872 459L834 511L793 421Z" fill="url(#sideRight)" />
        <path d="M744 423H793L816 465L757 472Z" fill="url(#shade)" />
        <path d="M517 425L450 498" stroke="#dcdddf" strokeWidth="16" opacity="0.900" filter="url(#soft)" />
        <path d="M775 383Q815 380 850 400" stroke="#d0d1d3" strokeWidth="14" fill="none" opacity="0.800" filter="url(#soft)" />
        <path d="M352 365Q388 385 362 410" stroke="#727376" strokeWidth="20" fill="none" opacity="0.700" filter="url(#soft)" />
      </g>
      <path d={`${GARNISH}Z`} fill="#9fa0a3" fillOpacity="0.700" />
      <g fill="none" stroke="#0b0b0b" strokeWidth="1.300">
        {MESH.map((d) => (
          <path key={d} d={d} />
        ))}
      </g>
      <path d={OUTLINE} fill="none" stroke="#3f87b0" strokeWidth="1.100" />
      <path d={GARNISH} fill="none" stroke="#2f80b4" strokeWidth="1.800" />
      <path d="M481 422H793" stroke="#2d79a8" strokeWidth="1.500" />

      {/* neighbouring planes seen edge-on */}
      <path d="M289 833.500H979" stroke="#7488ac" strokeWidth="3.200" />
      <path d="M289 833H979" stroke="#152a57" strokeWidth="2.200" />
      <path d="M636.500 271V861" stroke="#6f8fc4" strokeWidth="3.400" />
      <path d="M636 271V861" stroke="#173a7c" strokeWidth="2.200" />
      <text transform="translate(979 744) rotate(90)" fontFamily="DejaVu Sans, sans-serif" fontSize="23" fill="#2f4468" stroke="#2f4468" strokeWidth="0.500">
        Front Plane
      </text>

      <path d="M283 946h21v-2.500l9 4.500-9 4v-2.500h-21z" fill="#1c9a22" />
      <path d="M281 948h4v21h3l-5 9-5-9h3z" fill="#0b1070" />
      <g fontFamily="Liberation Sans, sans-serif" fontSize="9" textAnchor="middle">
        <text x="283" y="948" fill="#7a2430">X</text>
        <text x="319" y="948" fill="#4fd04f">Y</text>
        <text x="283" y="984" fill="#1c2390">Z</text>
      </g>
    </svg>
  );
}

function Viewport() {
  return (
    <main className="relative min-w-0 flex-1 overflow-hidden bg-[linear-gradient(176deg,#ffffff_0%,#ffffff_18%,#f4f5f9_30%,#dcdfe9_42%,#d2d7e4_50%,#dde1eb_56%,#f0f2f6_64%,#ffffff_74%,#ffffff_90%,#f8f8fb_100%)]">
      <ModelView />
      <button type="button" aria-label="Collapse panel" className="absolute top-[403px] left-0 flex h-[38px] w-2 items-center justify-center bg-[#4a4a4a]">
        <span className="h-1.5 w-1.5 shrink-0 rounded-full bg-[#e0e0e0]" />
      </button>
      <div className="absolute top-[5px] -right-px flex gap-1.5">
        {['zoomFit', 'zoomArea', 'prevView', 'section', 'orient'].map((name) => (
          <button key={name} type="button" aria-label={name}>
            <Icon name={name} />
          </button>
        ))}
      </div>
    </main>
  );
}

function BottomTabs() {
  const arrows = ['M4 3v6M10 3L6 6l4 3z', 'M8 3L4 6l4 3z', 'M4 3l4 3-4 3z', 'M3 3l4 3-4 3zM9 3v6'];

  return (
    <div className="flex h-4 shrink-0 border-b border-[#868686] pl-[3px]">
      {arrows.map((d) => (
        <button key={d} type="button" aria-label="Scroll tabs" className="w-[15px] border border-[#8a8a8a] bg-[#a3a3a3]">
          <svg viewBox="0 0 12 12" width="12" height="12" fill="#8b8b8b" stroke="#7b7b7b"><path d={d} /></svg>
        </button>
      ))}
      <button type="button" className="ml-1 w-[57px] border-r border-[#868686] text-xs leading-[14px] font-bold text-white">Model</button>
      <button type="button" className="w-[107px] border-r border-[#868686] bg-[#2f2f2f] pr-2 text-xs leading-[14px] whitespace-nowrap text-white">Motion Study 1</button>
    </div>
  );
}

export default function App() {
  return (
    <div className="flex h-screen flex-col overflow-hidden bg-[#4a4a4a] font-['Noto_Sans','Open_Sans',sans-serif] text-[11px] text-[#ececec]">
      <TitleBar />
      <Ribbon />
      <RibbonTabs />
      <div className="flex min-h-0 flex-1">
        <FeatureTree />
        <Viewport />
      </div>
      <BottomTabs />
      <footer className="h-[18px] shrink-0 pl-px leading-[18px]">SOLIDWORKS Premium 2020 SP5.0</footer>
    </div>
  );
}
